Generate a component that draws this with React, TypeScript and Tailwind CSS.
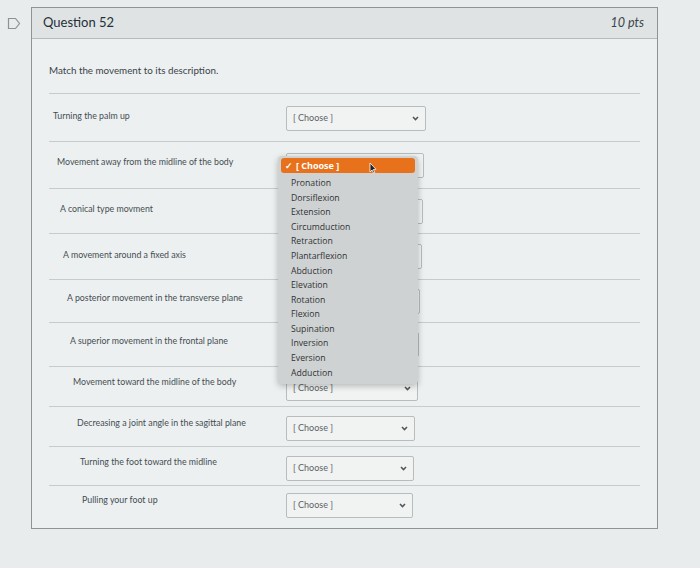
import React from "react";

type Row = {
  label: string;
  h: string;
  indent: string;
  labelTop: string;
  selectTop: string;
  selectW: string;
  covered?: boolean;
};

const rows: Row[] = [
  { label: "Turning the palm up", h: "h-[48px]", indent: "pl-[4px]", labelTop: "pt-[15px]", selectTop: "mt-[12px]", selectW: "w-[140px]" },
  { label: "Movement away from the midline of the body", h: "h-[47px]", indent: "pl-[8px]", labelTop: "pt-[13px]", selectTop: "mt-[11px]", selectW: "w-[138px]", covered: true },
  { label: "A conical type movment", h: "h-[45px]", indent: "pl-[11px]", labelTop: "pt-[13px]", selectTop: "mt-[10px]", selectW: "w-[137px]", covered: true },
  { label: "A movement around a fixed axis", h: "h-[46px]", indent: "pl-[14px]", labelTop: "pt-[14px]", selectTop: "mt-[10px]", selectW: "w-[136px]", covered: true },
  { label: "A posterior movement in the transverse plane", h: "h-[43px]", indent: "pl-[18px]", labelTop: "pt-[11px]", selectTop: "mt-[9px]", selectW: "w-[134px]", covered: true },
  { label: "A superior movement in the frontal plane", h: "h-[44px]", indent: "pl-[21px]", labelTop: "pt-[11px]", selectTop: "mt-[9px]", selectW: "w-[133px]", covered: true },
  { label: "Movement toward the midline of the body", h: "h-[40px]", indent: "pl-[24px]", labelTop: "pt-[8px]", selectTop: "mt-[9px]", selectW: "w-[132px]" },
  { label: "Decreasing a joint angle in the sagittal plane", h: "h-[40px]", indent: "pl-[28px]", labelTop: "pt-[9px]", selectTop: "mt-[9px]", selectW: "w-[129px]" },
  { label: "Turning the foot toward the midline", h: "h-[39px]", indent: "pl-[31px]", labelTop: "pt-[8px]", selectTop: "mt-[9px]", selectW: "w-[128px]" },
  { label: "Pulling your foot up", h: "h-[40px]", indent: "pl-[33px]", labelTop: "pt-[7px]", selectTop: "mt-[7px]", selectW: "w-[127px]" },
];

const options = [
  "Pronation",
  "Dorsiflexion",
  "Extension",
  "Circumduction",
  "Retraction",
  "Plantarflexion",
  "Abduction",
  "Elevation",
  "Rotation",
  "Flexion",
  "Supination",
  "Inversion",
  "Eversion",
  "Adduction",
];

function Chevron() {
  return (
    <svg width="7" height="5" viewBox="0 0 7 5" className="shrink-0">
      <path d="M1 1 L3.5 3.6 L6 1" fill="none" stroke="#4f565b" strokeWidth="1.5" />
    </svg>
  );
}

function ChooseSelect({ top, width, covered }: { top: string; width: string; covered?: boolean }) {
  return (
    <div
      className={`${top} ${width} flex h-[25px] items-center justify-between rounded-[2px] border border-[#b7bcbd] bg-[#f1f3f3] pl-[6px] pr-[6px]`}
    >
      {/* the open menu hides these, so only the frame shows */}
      <span className="text-[9px] text-[#5b6266]">{covered ? "" : "[ Choose ]"}</span>
      <Chevron />
    </div>
  );
}

function Dropdown() {
  return (
    <div className="absolute left-[278px] top-[156px] z-10 flex h-[228px] w-[140px] flex-col rounded-[4px] bg-[#cfd2d2] px-[3px] pt-[2px] shadow-[0_2px_6px_rgba(0,0,0,0.25)] font-['Open_Sans',sans-serif]">
      <div className="relative mb-[3px] flex h-[15px] items-center rounded-[3px] bg-[#e8721c] pl-[4px] text-[9px] font-bold leading-none text-white">
        <span className="mr-[3px]">✓</span>[ Choose ]
        <svg
          width="8"
          height="12"
          viewBox="0 0 8 12"
          className="absolute left-[88px] top-[4px]"
        >
          <path d="M1 1 L1 10 L3 8 L4.6 11 L5.8 10.4 L4.3 7.5 L7 7.3 Z" fill="#222" stroke="#fff" strokeWidth="0.8" />
        </svg>
      </div>
      {options.map((o) => (
        <div
          key={o}
          className="flex h-[14.6px] items-center pl-[10px] text-[8.7px] leading-none text-[#2f3336]"
        >
          {o}
        </div>
      ))}
    </div>
  );
}

export default function App() {
  return (
    <div className="relative h-[568px] w-[700px] overflow-hidden bg-[#e8ecec] font-['Lato',sans-serif] text-[#2d3b45]">
      <div className="flex pt-[7px]">
        <div className="flex w-[31px] justify-start pl-[7px] pt-[10px]">
          <svg width="14" height="13" viewBox="0 0 14 13">
            <path d="M1.5 1.5 H8.5 L12.5 6.5 L8.5 11.5 H1.5 Z" fill="none" stroke="#8c9296" strokeWidth="1.2" />
          </svg>
        </div>

        <div className="w-[627px] border border-[#8e9494] bg-[#edf0f0]">
          <div className="flex h-[31px] items-center justify-between border-b border-[#b5baba] bg-[#dfe3e3] pl-[11px] pr-[13px]">
            <span className="text-[13px] text-[#243039]">Question 52</span>
            <span className="text-[12.5px] italic text-[#3b454c]">10 pts</span>
          </div>

          <div className="px-[17px] pb-[3px] pt-[24px]">
            <p className="text-[9.8px] text-[#39434a]">Match the movement to its description.</p>

            <div className="mt-[15px]">
              {rows.map((r) => (
                <div key={r.label} className={`${r.h} flex border-t border-[#c6cbcb]`}>
                  <div className={`${r.indent} ${r.labelTop} w-[237px] text-[8.8px] leading-[14px] text-[#444d53]`}>
                    {r.label}
                  </div>
                  <ChooseSelect top={r.selectTop} width={r.selectW} covered={r.covered} />
                </div>
              ))}
            </div>
          </div>
        </div>
      </div>

      <Dropdown />
    </div>
  );
}
